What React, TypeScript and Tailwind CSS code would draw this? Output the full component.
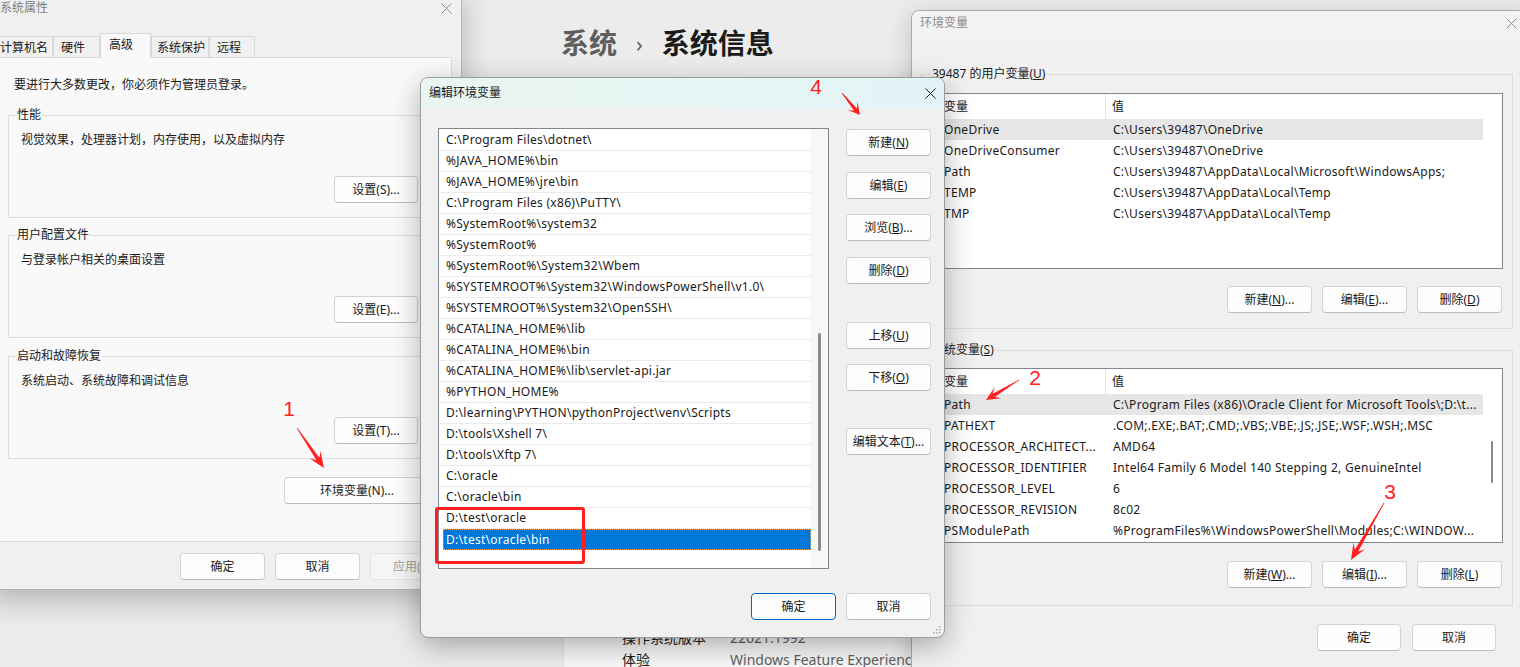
import React from "react";

type Pt = [number, number];

const paths = [
  "C:\\Program Files\\dotnet\\",
  "%JAVA_HOME%\\bin",
  "%JAVA_HOME%\\jre\\bin",
  "C:\\Program Files (x86)\\PuTTY\\",
  "%SystemRoot%\\system32",
  "%SystemRoot%",
  "%SystemRoot%\\System32\\Wbem",
  "%SYSTEMROOT%\\System32\\WindowsPowerShell\\v1.0\\",
  "%SYSTEMROOT%\\System32\\OpenSSH\\",
  "%CATALINA_HOME%\\lib",
  "%CATALINA_HOME%\\bin",
  "%CATALINA_HOME%\\lib\\servlet-api.jar",
  "%PYTHON_HOME%",
  "D:\\learning\\PYTHON\\pythonProject\\venv\\Scripts",
  "D:\\tools\\Xshell 7\\",
  "D:\\tools\\Xftp 7\\",
  "C:\\oracle",
  "C:\\oracle\\bin",
  "D:\\test\\oracle",
  "D:\\test\\oracle\\bin",
];

const userVars: [string, string][] = [
  ["OneDrive", "C:\\Users\\39487\\OneDrive"],
  ["OneDriveConsumer", "C:\\Users\\39487\\OneDrive"],
  ["Path", "C:\\Users\\39487\\AppData\\Local\\Microsoft\\WindowsApps;"],
  ["TEMP", "C:\\Users\\39487\\AppData\\Local\\Temp"],
  ["TMP", "C:\\Users\\39487\\AppData\\Local\\Temp"],
];

const sysVars: [string, string][] = [
  ["Path", "C:\\Program Files (x86)\\Oracle Client for Microsoft Tools\\;D:\\t..."],
  ["PATHEXT", ".COM;.EXE;.BAT;.CMD;.VBS;.VBE;.JS;.JSE;.WSF;.WSH;.MSC"],
  ["PROCESSOR_ARCHITECT...", "AMD64"],
  ["PROCESSOR_IDENTIFIER", "Intel64 Family 6 Model 140 Stepping 2, GenuineIntel"],
  ["PROCESSOR_LEVEL", "6"],
  ["PROCESSOR_REVISION", "8c02"],
  ["PSModulePath", "%ProgramFiles%\\WindowsPowerShell\\Modules;C:\\WINDOW..."],
];

const arrows: { s: Pt; e: Pt; head: number }[] = [
  { s: [297, 428], e: [324, 468], head: 16 },
  { s: [842, 93], e: [860, 115], head: 12 },
  { s: [1019, 380], e: [986, 400], head: 14 },
  { s: [1384, 503], e: [1351, 560], head: 16 },
];

// tapered red arrow like the ones a screenshot tool draws
function arrowPoints(s: Pt, e: Pt, head: number): string {
  const dx = e[0] - s[0];
  const dy = e[1] - s[1];
  const len = Math.hypot(dx, dy);
  const ux = dx / len;
  const uy = dy / len;
  const nx = -uy;
  const ny = ux;
  const at = (d: number, w: number) =>
    `${(e[0] - ux * d + nx * w).toFixed(1)},${(e[1] - uy * d + ny * w).toFixed(1)}`;
  return [
    at(len, 0.4),
    at(head - 5, 1.9),
    at(head, 6.5),
    at(0, 0),
    at(head, -6.5),
    at(head - 5, -1.9),
    at(len, -0.4),
  ].join(" ");
}

function CloseX({ color = "#1a1a1a" }: { color?: string }) {
  return (
    <svg width="11" height="11" viewBox="0 0 11 11">
      <path d="M0.5 0.5L10.5 10.5M10.5 0.5L0.5 10.5" stroke={color} strokeWidth="1" />
    </svg>
  );
}

function Btn({
  children,
  className = "",
  variant = "normal",
}: {
  children: React.ReactNode;
  className?: string;
  variant?: "normal" | "primary" | "disabled";
}) {
  const look =
    variant === "primary"
      ? "border-[#0067c0] bg-[#fdfdfd] text-[#1a1a1a]"
      : variant === "disabled"
      ? "border-[#e3e3e3] bg-[#f5f5f5] text-[#a0a0a0]"
      : "border-[#d3d3d3] border-b-[#bdbdbd] bg-[#fdfdfd] text-[#1a1a1a]";
  return (
    <div
      className={`flex h-[27px] shrink-0 items-center justify-center rounded-[4px] border text-[12px] leading-none ${look} ${className}`}
    >
      {children}
    </div>
  );
}

function Group({ label, desc, btn, className = "" }: { label: string; desc: string; btn: string; className?: string }) {
  return (
    <div className={`relative ml-[12px] flex h-[103px] w-[436px] shrink-0 flex-col border border-[#dcdcdc] ${className}`}>
      <span className="absolute left-[7px] top-[-9px] bg-[#f9f9f9] px-[1px] leading-[16px]">{label}</span>
      <p className="ml-[12px] mt-[16px] leading-[16px]">{desc}</p>
      <Btn className="mr-[25px] mt-[28px] w-[84px] self-end">{btn}</Btn>
    </div>
  );
}

function SystemProperties() {
  const tabs = [
    { t: "计算机名", w: "w-[60px] pl-[6px]" },
    { t: "硬件", w: "w-[47px] pl-[7px]" },
    { t: "高级", w: "w-[51px] pl-[8px]", on: true },
    { t: "系统保护", w: "w-[58px] pl-[5px]" },
    { t: "远程", w: "w-[46px] pl-[7px]" },
  ];
  return (
    <div className="absolute left-[-12px] top-[-12px] flex h-[602px] w-[474px] flex-col rounded-b-[8px] border border-[#b4b4b4] bg-[#f0f0f0] shadow-[0_10px_30px_rgba(0,0,0,0.25)]">
      <div className="flex h-[38px] shrink-0 items-center justify-between pl-[11px] pr-[9px] text-[#808080]">
        <span>系统属性</span>
        <CloseX color="#8a8a8a" />
      </div>
      <div className="mt-[6px] flex h-[25px] shrink-0 items-end pl-[4px]">
        {tabs.map((tab) =>
          tab.on ? (
            <div
              key={tab.t}
              className={`relative z-10 flex h-[25px] items-center border border-b-0 border-[#d9d9d9] bg-[#f9f9f9] pb-[2px] ${tab.w}`}
            >
              {tab.t}
            </div>
          ) : (
            <div
              key={tab.t}
              className={`flex h-[22px] items-center border border-b-0 border-[#d9d9d9] bg-[#f0f0f0] ${tab.w}`}
            >
              {tab.t}
            </div>
          )
        )}
      </div>
      <div className="-mt-[1px] ml-[6px] flex h-[485px] w-[457px] shrink-0 flex-col border border-[#d9d9d9] bg-[#f9f9f9]">
        <p className="ml-[18px] mt-[19px] leading-[16px]">要进行大多数更改，你必须作为管理员登录。</p>
        <Group className="mt-[22px]" label="性能" desc="视觉效果，处理器计划，内存使用，以及虚拟内存" btn="设置(S)..." />
        <Group className="mt-[17px]" label="用户配置文件" desc="与登录帐户相关的桌面设置" btn="设置(E)..." />
        <Group className="mt-[18px]" label="启动和故障恢复" desc="系统启动、系统故障和调试信息" btn="设置(T)..." />
        <Btn className="mr-[21px] mt-[18px] w-[146px] self-end">环境变量(N)...</Btn>
      </div>
      <div className="flex justify-end gap-[10px] pr-[6px] pt-[11px]">
        <Btn className="w-[85px]">确定</Btn>
        <Btn className="w-[85px]">取消</Btn>
        <Btn className="w-[85px]" variant="disabled">
          应用(A)
        </Btn>
      </div>
    </div>
  );
}

function VarList({ rows, className, thumb }: { rows: [string, string][]; className: string; thumb?: boolean }) {
  return (
    <div className={`ml-[8px] flex w-[574px] shrink-0 border border-[#828790] bg-white ${className}`}>
      <div className="flex w-[553px] flex-col">
        <div className="flex h-[25px] shrink-0">
          <div className="flex w-[176px] items-center border-r border-[#e5e5e5] pl-[14px]">变量</div>
          <div className="flex items-center pl-[6px]">值</div>
        </div>
        {rows.map(([k, v], i) => (
          <div
            key={k}
            className={`flex h-[21px] shrink-0 items-center tracking-[0.28px] ${i === 0 ? "bg-[#e6e6e6]" : ""}`}
          >
            <div className="w-[176px] shrink-0 overflow-hidden whitespace-nowrap pl-[14px]">{k}</div>
            <div className="flex-1 overflow-hidden whitespace-nowrap pl-[7px]">{v}</div>
          </div>
        ))}
      </div>
      <div className="flex flex-1 flex-col">
        {thumb && <div className="ml-[8px] mt-[72px] h-[42px] w-[2px] rounded-full bg-[#8b8b8b]" />}
      </div>
    </div>
  );
}

function EnvVariables() {
  return (
    <div className="absolute left-[911px] top-[10px] flex h-[670px] w-[623px] flex-col rounded-t-[8px] border border-[#ababab] bg-[#f0f0f0] shadow-[0_6px_24px_rgba(0,0,0,0.2)]">
      <div className="flex h-[30px] shrink-0 items-center justify-between rounded-t-[8px] bg-[#f3f3f3] pb-[6px] pl-[8px] pr-[16px] text-[#8c8c8c]">
        <span>环境变量</span>
        <CloseX color="#8c8c8c" />
      </div>
      <div className="relative ml-[8px] mt-[33px] flex h-[255px] w-[593px] shrink-0 flex-col border border-[#dcdcdc]">
        <span className="absolute left-[10px] top-[-9px] bg-[#f0f0f0] px-[1px] leading-[16px]">
          39487 的用户变量(<u>U</u>)
        </span>
        <VarList rows={userVars} className="mt-[18px] h-[176px]" />
        <div className="mt-[17px] flex justify-end gap-[10px] pr-[10px]">
          <Btn className="w-[85px]">
            新建(<u>N</u>)...
          </Btn>
          <Btn className="w-[85px]">
            编辑(<u>E</u>)...
          </Btn>
          <Btn className="w-[85px]">
            删除(<u>D</u>)
          </Btn>
        </div>
      </div>
      <div className="relative ml-[8px] mt-[21px] flex h-[256px] w-[593px] shrink-0 flex-col border border-[#dcdcdc]">
        <span className="absolute left-[10px] top-[-9px] bg-[#f0f0f0] px-[1px] leading-[16px]">
          系统变量(<u>S</u>)
        </span>
        <VarList rows={sysVars} className="mt-[17px] h-[175px]" thumb />
        <div className="mt-[18px] flex justify-end gap-[10px] pr-[10px]">
          <Btn className="w-[85px]">
            新建(<u>W</u>)...
          </Btn>
          <Btn className="w-[85px]">
            编辑(<u>I</u>)...
          </Btn>
          <Btn className="w-[85px]">
            删除(<u>L</u>)
          </Btn>
        </div>
      </div>
      <div className="mt-[18px] flex justify-end gap-[11px] pr-[37px]">
        <Btn className="w-[84px]">确定</Btn>
        <Btn className="w-[84px]">取消</Btn>
      </div>
    </div>
  );
}

function EditPath() {
  const side = [
    { k: "新建", a: "N", tail: "", mt: "" },
    { k: "编辑", a: "E", tail: "", mt: "mt-[16px]" },
    { k: "浏览", a: "B", tail: "...", mt: "mt-[15px]" },
    { k: "删除", a: "D", tail: "", mt: "mt-[16px]" },
    { k: "上移", a: "U", tail: "", mt: "mt-[38px]" },
    { k: "下移", a: "O", tail: "", mt: "mt-[15px]" },
    { k: "编辑文本", a: "T", tail: "...", mt: "mt-[37px]" },
  ];
  return (
    <div className="absolute left-[420px] top-[77px] flex h-[561px] w-[525px] flex-col overflow-hidden rounded-[8px] border border-[#9c9c9c] bg-[#f0f0f0] shadow-[0_8px_28px_rgba(0,0,0,0.3)]">
      <div className="flex h-[30px] shrink-0 items-center justify-between bg-linear-to-r from-[#e9f5f0] to-[#e2f4f7] pl-[8px] pr-[8px]">
        <span>编辑环境变量</span>
        <CloseX />
      </div>
      <div className="flex pl-[17px] pt-[20px]">
        <div className="flex h-[441px] w-[391px] shrink-0 border border-[#828790] bg-white tracking-[0.28px]">
          <div className="flex w-[372px] flex-col pl-[1px] pt-[1px]">
            {paths.map((p, i) =>
              i === paths.length - 1 ? (
                <div key={p} className="flex h-[21px] shrink-0 pl-[3px]">
                  <div className="flex flex-1 items-center border border-dotted border-[#f0a860] bg-[#0078d7] pl-[2px] text-white">
                    {p}
                  </div>
                </div>
              ) : (
                <div key={p} className="flex h-[21px] shrink-0 items-center border-b border-[#ebebeb] pl-[6px]">
                  {p}
                </div>
              )
            )}
          </div>
          <div className="flex flex-1 flex-col bg-[#f7f7f7]">
            <div className="ml-[7px] mt-[204px] h-[218px] w-[3px] rounded-full bg-[#8a8a8a]" />
          </div>
        </div>
        <div className="ml-[17px] flex flex-col pt-[1px]">
          {side.map((b) => (
            <Btn key={b.k} className={`w-[85px] ${b.mt}`}>
              {b.k}(<u>{b.a}</u>){b.tail}
            </Btn>
          ))}
        </div>
      </div>
      <div className="flex justify-end gap-[10px] pr-[13px] pt-[24px]">
        <Btn className="w-[85px]" variant="primary">
          确定
        </Btn>
        <Btn className="w-[85px]">取消</Btn>
      </div>
      <svg className="absolute bottom-[3px] right-[3px]" width="8" height="8" viewBox="0 0 8 8">
        <g fill="#a8a8a8">
          <rect x="6" y="0" width="1.4" height="1.4" />
          <rect x="3" y="3" width="1.4" height="1.4" />
          <rect x="6" y="3" width="1.4" height="1.4" />
          <rect x="0" y="6" width="1.4" height="1.4" />
          <rect x="3" y="6" width="1.4" height="1.4" />
          <rect x="6" y="6" width="1.4" height="1.4" />
        </g>
      </svg>
    </div>
  );
}

function SettingsBackdrop() {
  return (
    <div className="absolute inset-0 flex flex-col bg-[#ececec]">
      <div className="ml-[561px] mt-[24px] flex h-[38px] items-center text-[28px] font-semibold leading-none">
        <span className="text-[#5f5f5f]">系统</span>
        <span className="mx-[19px] text-[22px] font-normal text-[#5f5f5f]">›</span>
        <span className="text-[#1b1b1b]">系统信息</span>
      </div>
      <div className="flex-1" />
      <div className="ml-[563px] flex h-[53px] w-[349px] flex-col rounded-t-[6px] border border-b-0 border-[#e3e3e3] bg-[#f8f8f8] pl-[58px] pt-[13px] text-[14px]">
        <div className="flex whitespace-nowrap leading-[20px]">
          <span className="w-[108px] shrink-0">操作系统版本</span>
          <span className="text-[#5f5f5f]">22621.1992</span>
        </div>
        <div className="mt-[5px] flex whitespace-nowrap leading-[14px]">
          <span className="w-[108px] shrink-0">体验</span>
          <span className="text-[#5f5f5f]">Windows Feature Experience Pack</span>
        </div>
      </div>
    </div>
  );
}

export default function App() {
  const marks = [
    { n: "1", pos: "left-[289px] top-[408px]" },
    { n: "2", pos: "left-[1035px] top-[377px]" },
    { n: "3", pos: "left-[1390px] top-[491px]" },
    { n: "4", pos: "left-[816px] top-[86px]" },
  ];
  return (
    <div className="relative h-[667px] w-[1520px] overflow-hidden font-['Noto_Sans','Noto_Sans_CJK_SC',sans-serif] text-[12px] text-[#1a1a1a]">
      <SettingsBackdrop />
      <SystemProperties />
      <EnvVariables />
      <EditPath />
      {/* red rectangle around the two new entries */}
      <div className="absolute left-[435px] top-[507px] h-[57px] w-[150px] rounded-[3px] border-[3px] border-[#ff1f1f]" />
      <svg className="pointer-events-none absolute inset-0" width="1520" height="667">
        {arrows.map((a, i) => (
          <polygon key={i} points={arrowPoints(a.s, a.e, a.head)} fill="#ff2020" />
        ))}
      </svg>
      {marks.map((m) => (
        <span
          key={m.n}
          className={`absolute -translate-x-1/2 -translate-y-1/2 font-['Liberation_Sans',sans-serif] text-[21px] leading-none text-[#ff2020] ${m.pos}`}
        >
          {m.n}
        </span>
      ))}
    </div>
  );
}
